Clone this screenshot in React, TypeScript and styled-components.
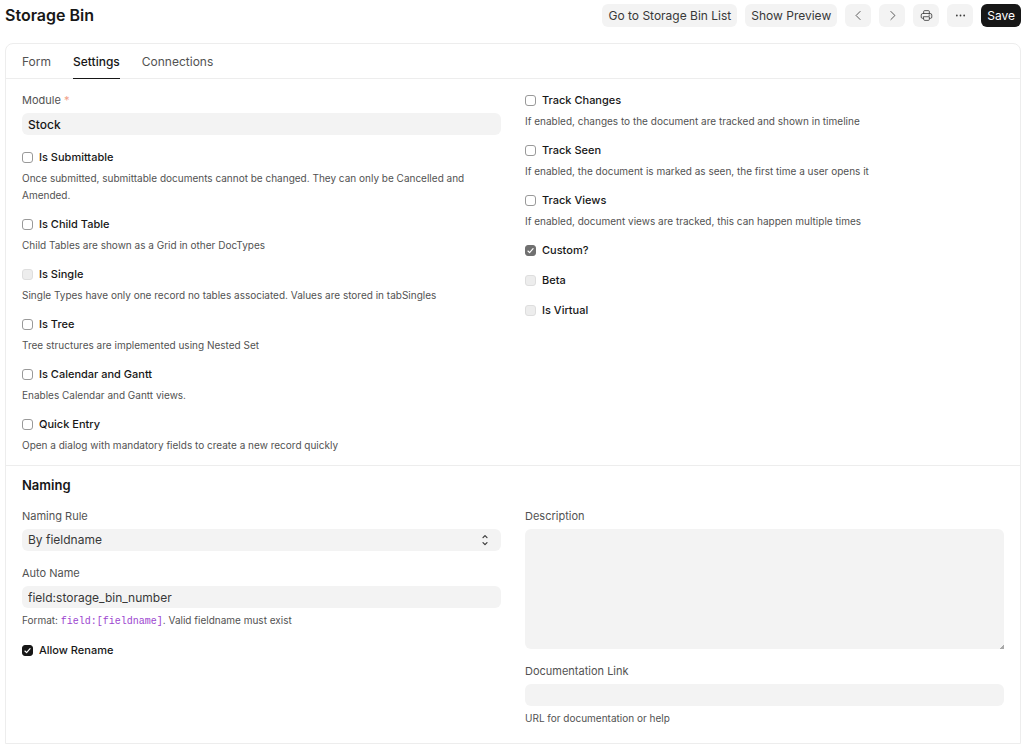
import React, { useId } from "react";
import styled, { createGlobalStyle } from "styled-components";

const GlobalStyle = createGlobalStyle`
  *, *::before, *::after { box-sizing: border-box; }
  body {
    margin: 0;
    background: #fff;
    color: #171717;
    font-family: Inter, "Liberation Sans", sans-serif;
    font-size: 12px;
    line-height: 16px;
  }
  button, input, select, textarea { font: inherit; color: inherit; }
`;

const PageHead = styled.header`
  display: flex;
  align-items: center;
  justify-content: space-between;
  gap: 16px;
  padding: 4px 3px 4px 5px;
`;

const Title = styled.h1`
  margin: 0;
  font-size: 16px;
  line-height: 23px;
  font-weight: 600;
`;

const Actions = styled.div`
  display: flex;
  gap: 8px;
`;

const Button = styled.button<{ $primary?: boolean; $icon?: boolean }>`
  display: flex;
  align-items: center;
  justify-content: center;
  height: 23px;
  width: ${(p) => (p.$icon ? "26px" : "auto")};
  padding: ${(p) => (p.$icon ? "0" : "0 6px")};
  border: 0;
  border-radius: 6px;
  font-size: 12px;
  white-space: nowrap;
  background: ${(p) => (p.$primary ? "#171717" : "#f3f3f3")};
  color: ${(p) => (p.$primary ? "#fff" : "#383838")};
`;

const Card = styled.main`
  margin: 12px 3px 0 5px;
  border: 1px solid #ededed;
  border-radius: 8px 8px 0 0;
`;

const Tabs = styled.nav`
  display: flex;
  gap: 22px;
  padding: 0 16px;
  border-bottom: 1px solid #ededed;
`;

const Tab = styled.a<{ $active?: boolean }>`
  padding: 10px 0 8px;
  margin-bottom: -1px;
  border-bottom: 1px solid ${(p) => (p.$active ? "#171717" : "transparent")};
  color: ${(p) => (p.$active ? "#171717" : "#525252")};
  font-weight: ${(p) => (p.$active ? 500 : 400)};
  text-decoration: none;
`;

const Section = styled.section`
  padding: 13px 16px 11px;
  & + & { border-top: 1px solid #ededed; padding: 10px 16px 16px; }
`;

const SectionTitle = styled.h2`
  margin: 0 0 14px;
  font-size: 13px;
  line-height: 18px;
  font-weight: 600;
`;

const Columns = styled.div`
  display: grid;
  grid-template-columns: 1fr 1fr;
  gap: 24px;
`;

const Column = styled.div`
  display: flex;
  flex-direction: column;
  gap: 12px;
  min-width: 0;
`;

const FieldBox = styled.div<{ $hinted: boolean }>`
  display: flex;
  flex-direction: column;
  padding-bottom: ${(p) => (p.$hinted ? "0" : "2px")};
`;

const Label = styled.label`
  margin-bottom: 5px;
  font-size: 11px;
  color: #525252;
`;

const Required = styled.span`
  color: #f0a088;
`;

const TextInput = styled.input<{ $strong?: boolean }>`
  width: 100%;
  height: 22px;
  padding: 0 6px;
  border: 0;
  border-radius: 6px;
  background: #f3f3f3;
  font-weight: ${(p) => (p.$strong ? 500 : 400)};
  color: ${(p) => (p.$strong ? "#171717" : "#383838")};
`;

const SelectWrap = styled.div`
  display: grid;
  align-items: center;
  & > * { grid-area: 1 / 1; }
  & > svg { justify-self: end; margin-right: 11px; pointer-events: none; }
`;

const Select = styled.select`
  width: 100%;
  height: 22px;
  padding: 0 6px;
  border: 0;
  border-radius: 6px;
  background: #f3f3f3;
  color: #383838;
  appearance: none;
`;

const TextArea = styled.textarea`
  display: block;
  width: 100%;
  height: 120px;
  padding: 6px;
  border: 0;
  border-radius: 6px 6px 0 6px;
  background: #f3f3f3;
  resize: vertical;
  &::-webkit-resizer {
    background: linear-gradient(135deg, transparent 84%, #a8a8a8 84%);
  }
`;

const Hint = styled.p<{ $gap: number }>`
  margin: ${(p) => p.$gap}px 0 0;
  font-size: 10px;
  line-height: 17px;
  color: #525252;
`;

const Code = styled.code`
  font-family: "Liberation Mono", monospace;
  font-size: 10px;
  color: #9c45cf;
`;

const CheckLabel = styled.label`
  display: flex;
  align-items: center;
  gap: 6px;
  font-size: 11px;
  font-weight: 500;
  color: #171717;
`;

const CheckWrap = styled.span`
  display: grid;
  place-items: center;
  & > * { grid-area: 1 / 1; }
  & > svg { pointer-events: none; }
`;

const Checkbox = styled.input`
  appearance: none;
  width: 11px;
  height: 11px;
  margin: 0;
  border: 1px solid #999;
  border-radius: 3px;
  background: #fff;
  &:disabled { background: #ededed; border-color: #dedede; }
  &:checked { background: #171717; border-color: #171717; }
  &:checked:disabled { background: #707070; border-color: #707070; }
`;

function Check({ label, hint, checked, disabled }: {
  label: string; hint?: string; checked?: boolean; disabled?: boolean;
}) {
  return (
    <FieldBox $hinted={!!hint}>
      <CheckLabel>
        <CheckWrap>
          <Checkbox type="checkbox" defaultChecked={checked} disabled={disabled} />
          {checked && (
            <svg width="11" height="11" viewBox="0 0 12 12" fill="none" stroke="#fff" strokeWidth="1.3" strokeLinecap="round" strokeLinejoin="round">
              <path d="M3.2 6.6 5 8.3 8.8 4" />
            </svg>
          )}
        </CheckWrap>
        {label}
      </CheckLabel>
      {hint && <Hint $gap={5}>{hint}</Hint>}
    </FieldBox>
  );
}

function Field({ label, required, hint, children }: {
  label: string; required?: boolean; hint?: React.ReactNode; children: (id: string) => React.ReactNode;
}) {
  const id = useId();
  return (
    <FieldBox $hinted={!!hint}>
      <Label htmlFor={id}>
        {label}
        {required && <Required> *</Required>}
      </Label>
      {children(id)}
      {hint && <Hint $gap={4}>{hint}</Hint>}
    </FieldBox>
  );
}

const iconProps = {
  width: 13, height: 13, viewBox: "0 0 16 16", fill: "none", stroke: "#383838",
  strokeLinecap: "round" as const, strokeLinejoin: "round" as const,
};

export default function App() {
  return (
    <>
      <GlobalStyle />
      <PageHead>
        <Title>Storage Bin</Title>
        <Actions>
          <Button>Go to Storage Bin List</Button>
          <Button>Show Preview</Button>
          <Button $icon aria-label="Previous">
            <svg {...iconProps}><path d="M10 3 5 8l5 5" /></svg>
          </Button>
          <Button $icon aria-label="Next">
            <svg {...iconProps}><path d="m6 3 5 5-5 5" /></svg>
          </Button>
          <Button $icon aria-label="Print">
            <svg {...iconProps}>
              <path d="M4.5 5.5V3.2a1.2 1.2 0 0 1 1.2-1.2h4.6a1.2 1.2 0 0 1 1.2 1.2v2.3M4 11.500H3A1.500 1.500 0 0 1 1.500 10V7.500a2 2 0 0 1 2-2h9a2 2 0 0 1 2 2V10a1.500 1.500 0 0 1-1.500 1.500h-1M4.500 9.500h7v3.300a1.200 1.200 0 0 1-1.200 1.200H5.700a1.200 1.200 0 0 1-1.200-1.200zM11 7.500h1" />
            </svg>
          </Button>
          <Button $icon aria-label="Menu">
            <svg {...iconProps} fill="#383838" stroke="none">
              <circle cx="3.500" cy="8" r="1.100" /><circle cx="8" cy="8" r="1.100" /><circle cx="12.500" cy="8" r="1.100" />
            </svg>
          </Button>
          <Button $primary>Save</Button>
        </Actions>
      </PageHead>
      <Card>
        <Tabs>
          <Tab href="#form">Form</Tab>
          <Tab href="#settings" $active aria-current="page">Settings</Tab>
          <Tab href="#connections">Connections</Tab>
        </Tabs>
        <Section>
          <Columns>
            <Column>
              <Field label="Module" required>
                {(id) => <TextInput id={id} $strong defaultValue="Stock" />}
              </Field>
              <Check label="Is Submittable" hint="Once submitted, submittable documents cannot be changed. They can only be Cancelled and Amended." />
              <Check label="Is Child Table" hint="Child Tables are shown as a Grid in other DocTypes" />
              <Check label="Is Single" disabled hint="Single Types have only one record no tables associated. Values are stored in tabSingles" />
              <Check label="Is Tree" hint="Tree structures are implemented using Nested Set" />
              <Check label="Is Calendar and Gantt" hint="Enables Calendar and Gantt views." />
              <Check label="Quick Entry" hint="Open a dialog with mandatory fields to create a new record quickly" />
            </Column>
            <Column>
              <Check label="Track Changes" hint="If enabled, changes to the document are tracked and shown in timeline" />
              <Check label="Track Seen" hint="If enabled, the document is marked as seen, the first time a user opens it" />
              <Check label="Track Views" hint="If enabled, document views are tracked, this can happen multiple times" />
              <Check label="Custom?" checked disabled />
              <Check label="Beta" disabled />
              <Check label="Is Virtual" disabled />
            </Column>
          </Columns>
        </Section>
        <Section>
          <SectionTitle>Naming</SectionTitle>
          <Columns>
            <Column>
              <Field label="Naming Rule">
                {(id) => (
                  <SelectWrap>
                    <Select id={id} defaultValue="By fieldname">
                      <option>By fieldname</option>
                    </Select>
                    <svg width="10" height="12" viewBox="0 0 10 12" fill="none" stroke="#383838" strokeWidth="1.200" strokeLinecap="round" strokeLinejoin="round">
                      <path d="M3 3.700 5 1.700l2 2M3 8.700l2 2 2-2" />
                    </svg>
                  </SelectWrap>
                )}
              </Field>
              <Field label="Auto Name" hint={<>Format: <Code>field:[fieldname]</Code>. Valid fieldname must exist</>}>
                {(id) => <TextInput id={id} defaultValue="field:storage_bin_number" />}
              </Field>
              <Check label="Allow Rename" checked />
            </Column>
            <Column>
              <Field label="Description">{(id) => <TextArea id={id} />}</Field>
              <Field label="Documentation Link" hint="URL for documentation or help">
                {(id) => <TextInput id={id} />}
              </Field>
            </Column>
          </Columns>
        </Section>
      </Card>
    </>
  );
}
